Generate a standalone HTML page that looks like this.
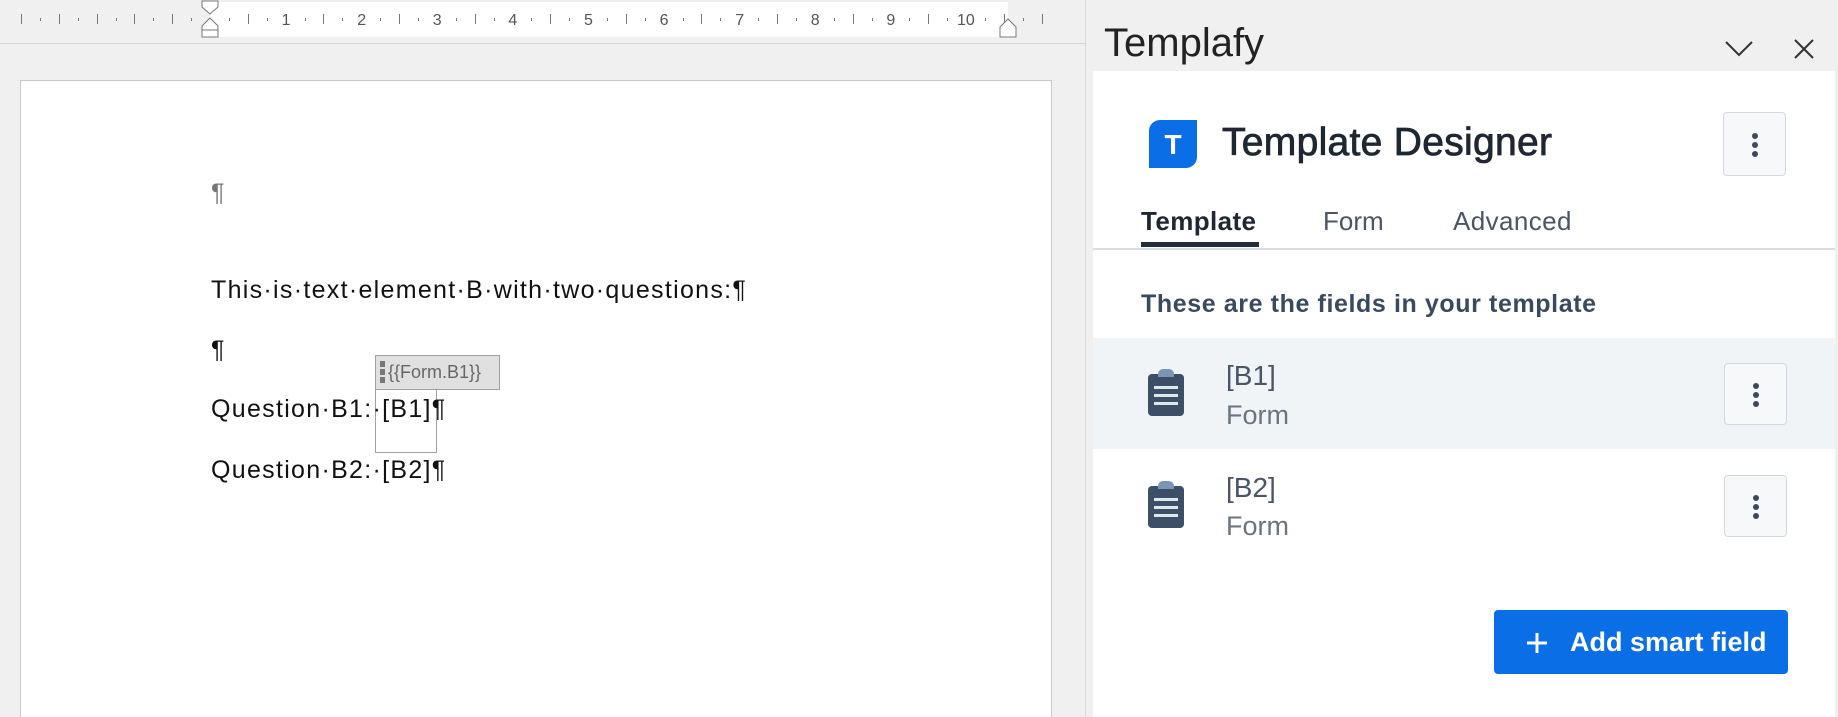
<!DOCTYPE html>
<html style="overflow:hidden;width:1838px;height:717px"><head><meta charset="utf-8">
<style>
*{margin:0;padding:0;box-sizing:border-box}
body{width:1838px;height:717px;overflow:hidden;background:#f0f0f0;font-family:"Liberation Sans",sans-serif;position:relative}
.a{position:absolute;white-space:nowrap}
.doc{font-size:25px;color:#111;line-height:1;letter-spacing:1.3px}
.num{font-size:16px;color:#555;top:12px}
.tick{position:absolute;width:1px;background:#777}
.dots{position:absolute;background:#f7f8fa;border:1.5px solid #d3d8de;border-radius:4px}
.dots i{position:absolute;left:50%;width:6px;height:6px;margin-left:-3px;border-radius:50%;background:#3d4a5c}
.clip{position:absolute;width:36px;height:42px;background:#3d4f66;border-radius:4px}
.clip b{position:absolute;left:10px;top:-5px;width:16px;height:8px;background:#7a95b5;border-radius:5px 5px 0 0}
.clip i{position:absolute;left:6px;width:24px;height:3px;background:#e0e7ef}
</style></head><body>
<div class="a" style="left:0;top:0;width:1085px;height:44px;background:#f0f0f0;border-bottom:1px solid #d6d6d6"></div>
<div class="a" style="left:210px;top:2px;width:798px;height:35px;background:#fff"></div>
<div id="ruler"></div>
<div class="a" style="left:20px;top:80px;width:1032px;height:640px;background:#fff;border:1px solid #c8c8c8"></div>
<div class="a doc" style="left:211px;top:181px;color:#777">¶</div>
<div class="a doc" style="left:211px;top:278px">This·is·text·element·B·with·two·questions:¶</div>
<div class="a doc" style="left:211px;top:338px">¶</div>
<div class="a" style="left:375px;top:355px;width:125px;height:35px;background:#e0e0e0;border:1px solid #a0a0a0"></div>
<div class="a" style="left:380px;top:361px;width:5px;height:6px;background:#777;box-shadow:0 8px 0 #777,0 16px 0 #777"></div>
<div class="a" style="left:388px;top:362px;font-size:18px;color:#666">{{Form.B1}}</div>
<div class="a" style="left:375px;top:390px;width:62px;height:63px;border:1px solid #a0a0a0;border-top:none"></div>
<div class="a doc" style="left:211px;top:397px">Question·B1:·[B1]¶</div>
<div class="a doc" style="left:211px;top:458px">Question·B2:·[B2]¶</div>
<div class="a" style="left:1085px;top:0;width:1px;height:717px;background:#dcdcdc"></div>
<div class="a" style="left:1086px;top:0;width:752px;height:717px;background:#f0f0f0"></div>
<div class="a" style="left:1104px;top:21px;font-size:40px;color:#222">Templafy</div>
<svg class="a" style="left:1724px;top:38px" width="30" height="20"><path d="M2 4 L15 17 L28 4" fill="none" stroke="#333" stroke-width="2"/></svg>
<svg class="a" style="left:1793px;top:38px" width="22" height="22"><path d="M2 2 L20 20 M20 2 L2 20" fill="none" stroke="#333" stroke-width="2"/></svg>
<div class="a" style="left:1093px;top:71px;width:742px;height:646px;background:#fff"></div>
<div class="a" style="left:1149px;top:120px;width:48px;height:48px;background:#0a6ee6;border-radius:11px 0 11px 0"></div>
<div class="a" style="left:1149px;top:129px;width:48px;text-align:center;font-size:28px;font-weight:bold;color:#fff">T</div>
<div class="a" style="left:1222px;top:121px;font-size:39px;letter-spacing:0.3px;color:#1f2733;-webkit-text-stroke:0.8px #1f2733">Template Designer</div>
<div class="dots" style="left:1723px;top:112px;width:63px;height:64px"><i style="top:20px"></i><i style="top:29px"></i><i style="top:38px"></i></div>
<div class="a" style="left:1141px;top:206px;font-size:26px;font-weight:bold;color:#1f2733;letter-spacing:0.4px">Template</div>
<div class="a" style="left:1323px;top:206px;font-size:26px;color:#4a5566">Form</div>
<div class="a" style="left:1453px;top:206px;font-size:26px;color:#4a5566;letter-spacing:0.4px">Advanced</div>
<div class="a" style="left:1093px;top:248px;width:742px;height:2px;background:#d8dde3"></div>
<div class="a" style="left:1141px;top:242px;width:118px;height:5px;background:#262d3a"></div>
<div class="a" style="left:1141px;top:290px;font-size:25px;font-weight:bold;color:#3a4a5e;letter-spacing:0.6px">These are the fields in your template</div>
<div class="a" style="left:1093px;top:338px;width:742px;height:111px;background:#f1f4f7"></div>
<div class="clip" style="left:1148px;top:374px"><b></b><i style="top:12px"></i><i style="top:20px"></i><i style="top:28px"></i></div>
<div class="a" style="left:1226px;top:360px;font-size:28px;color:#4a5566">[B1]</div>
<div class="a" style="left:1226px;top:400px;font-size:27px;color:#6b7480">Form</div>
<div class="dots" style="left:1724px;top:363px;width:63px;height:62px"><i style="top:19px"></i><i style="top:28px"></i><i style="top:37px"></i></div>
<div class="clip" style="left:1148px;top:486px"><b></b><i style="top:12px"></i><i style="top:20px"></i><i style="top:28px"></i></div>
<div class="a" style="left:1226px;top:472px;font-size:28px;color:#4a5566">[B2]</div>
<div class="a" style="left:1226px;top:511px;font-size:27px;color:#6b7480">Form</div>
<div class="dots" style="left:1724px;top:475px;width:63px;height:62px"><i style="top:19px"></i><i style="top:28px"></i><i style="top:37px"></i></div>
<div class="a" style="left:1494px;top:610px;width:294px;height:64px;background:#0a6ee6;border-radius:4px"></div>
<svg class="a" style="left:1525px;top:631px" width="24" height="24"><path d="M12 2 V22 M2 12 H22" stroke="#fff" stroke-width="3"/></svg>
<div class="a" style="left:1570px;top:627px;font-size:27px;font-weight:bold;color:#fff">Add smart field</div>
<script>
var r=document.getElementById('ruler'),h='';
var o=210,s=75.6;
for(var k=-3;k<=11;k++){for(var q=0;q<4;q++){var x=o+k*s+q*s/4;if(x<15||x>1050)continue;
if(q==0){if(k>=1&&k<=10)h+='<div class="a num" style="left:'+(x-(k>=10?9:4))+'px">'+k+'</div>';else if(k!=0)h+='<div class="tick" style="left:'+x+'px;top:14px;height:10px"></div>';}
else if(q==2)h+='<div class="tick" style="left:'+x+'px;top:14px;height:10px"></div>';
else h+='<div class="tick" style="left:'+x+'px;top:18px;height:3px"></div>';}}
h+='<svg class="a" style="left:199px;top:0" width="22" height="44"><path d="M3 1 H19 V7 L11 14 L3 7 Z M11 18 L19 26 V37 H3 V26 Z M3 30 H19" fill="#fff" stroke="#777"/></svg>';
h+='<svg class="a" style="left:997px;top:18px" width="22" height="20"><path d="M11 1 L19 9 V19 H3 V9 Z" fill="#fff" stroke="#777"/></svg>';
r.innerHTML=h;
</script>
</body></html>
